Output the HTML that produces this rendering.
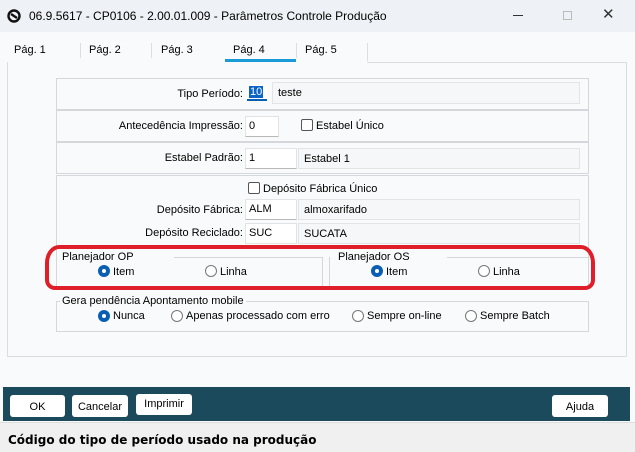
<!DOCTYPE html>
<html><head><meta charset="utf-8"><style>
*{box-sizing:border-box;margin:0;padding:0}
body{width:635px;height:452px;overflow:hidden;background:#f9fafb;font-family:"Liberation Sans",sans-serif;font-size:11px;color:#000;position:relative}
.a{position:absolute;white-space:nowrap}
.box{position:absolute;border:1px solid #d4d7db;background:#f9fafb}
.in{position:absolute;background:#fff;border:1px solid #e3e3e3;border-bottom:1px solid #b8b8b8;padding:3px 0 0 3px;font-size:11px}
.ro{position:absolute;background:#f6f7f8;border:1px solid #e2e4e6;padding:4px 0 0 5px}
.rl{position:absolute;text-align:right;width:200px}
.rad{position:absolute;width:12px;height:12px;border-radius:50%;border:1px solid #777;background:#fff}
.rad.on{border:none;background:#0a5fb4}
.rad.on:after{content:"";position:absolute;left:4px;top:4px;width:4px;height:4px;border-radius:50%;background:#fff}
.cb{position:absolute;width:12px;height:12px;border:1px solid #555;border-radius:2px;background:#fff}
.btn{position:absolute;background:#fff;border-radius:3px;text-align:center;padding-top:6px}
.vl{position:absolute;width:1px;background:#d4d7db}
.hl{position:absolute;height:1px;background:#d4d7db}
</style></head><body>
<div class="a" style="left:0;top:0;width:635px;height:32px;background:#eef1f5"></div>
<svg class="a" style="left:7px;top:9px" width="14" height="14" viewBox="0 0 14 14"><circle cx="7" cy="7" r="5.5" fill="none" stroke="#111" stroke-width="2.4"/><path d="M4 5 L10 9" stroke="#111" stroke-width="2.4"/></svg>
<div class="a" style="left:29px;top:9px;font-size:12px">06.9.5617 - CP0106 - 2.00.01.009 - Parâmetros Controle Produção</div>
<div class="a" style="left:513px;top:15px;width:10px;height:1px;background:#333"></div>
<div class="a" style="left:563px;top:11px;width:9px;height:9px;border:1px solid #bbb"></div>
<div class="a" style="left:602px;top:5px;font-size:15px;color:#333">✕</div>
<div class="a" style="left:0;top:32px;width:635px;height:30px;background:#f9fafb"></div>
<div class="a" style="left:14px;top:44px">Pág. 1</div>
<div class="a" style="left:80px;top:43px;width:1px;height:15px;background:#ddd"></div>
<div class="a" style="left:89px;top:44px">Pág. 2</div>
<div class="a" style="left:151px;top:43px;width:1px;height:15px;background:#ddd"></div>
<div class="a" style="left:161px;top:44px">Pág. 3</div>
<div class="a" style="left:233px;top:44px">Pág. 4</div>
<div class="a" style="left:225px;top:59px;width:71px;height:3px;background:#1a9bd7"></div>
<div class="a" style="left:296px;top:43px;width:1px;height:15px;background:#ddd"></div>
<div class="a" style="left:305px;top:44px">Pág. 5</div>
<div class="a" style="left:367px;top:43px;width:1px;height:18px;background:#ddd"></div>
<div class="box" style="left:7px;top:62px;width:620px;height:295px;border-color:#dcdcdc;border-top:none"></div>
<div class="a" style="left:367px;top:62px;width:260px;height:1px;background:#dcdcdc"></div>

<div class="box" style="left:56px;top:78px;width:533px;height:32px"></div>
<div class="rl" style="left:43px;top:88px">Tipo Período:</div>
<div class="a" style="left:247px;top:85px;width:20px;height:16px;background:#fff;border-bottom:2px solid #0a5fb4"><span style="background:#0a64c8;color:#fff;padding:0 1px;margin-left:2px;position:relative;top:1px">10</span></div>
<div class="ro" style="left:272px;top:82px;width:308px;height:22px">teste</div>

<div class="box" style="left:56px;top:110px;width:533px;height:32px"></div>
<div class="rl" style="left:43px;top:120px">Antecedência Impressão:</div>
<div class="in" style="left:245px;top:116px;width:34px;height:21px">0</div>
<div class="cb" style="left:301px;top:119px"></div>
<div class="a" style="left:316px;top:120px">Estabel Único</div>

<div class="box" style="left:56px;top:142px;width:533px;height:32px"></div>
<div class="rl" style="left:43px;top:152px">Estabel Padrão:</div>
<div class="in" style="left:245px;top:148px;width:52px;height:21px">1</div>
<div class="ro" style="left:298px;top:148px;width:282px;height:21px">Estabel 1</div>

<div class="box" style="left:56px;top:175px;width:533px;height:74px;border-bottom:none"></div>
<div class="cb" style="left:248px;top:182px"></div>
<div class="a" style="left:263px;top:183px">Depósito Fábrica Único</div>
<div class="rl" style="left:43px;top:204px">Depósito Fábrica:</div>
<div class="in" style="left:245px;top:199px;width:52px;height:21px">ALM</div>
<div class="ro" style="left:298px;top:199px;width:282px;height:21px">almoxarifado</div>
<div class="rl" style="left:43px;top:227px">Depósito Reciclado:</div>
<div class="in" style="left:245px;top:223px;width:52px;height:21px;border-bottom-color:#e3e3e3">SUC</div>
<div class="ro" style="left:298px;top:223px;width:282px;height:21px">SUCATA</div>

<div class="vl" style="left:56px;top:249px;height:40px"></div>
<div class="hl" style="left:174px;top:257px;width:148px"></div>
<div class="vl" style="left:322px;top:257px;height:32px"></div>
<div class="a" style="left:62px;top:251px">Planejador OP</div>
<div class="rad on" style="left:98px;top:265px"></div><div class="a" style="left:113px;top:266px">Item</div>
<div class="rad" style="left:205px;top:265px"></div><div class="a" style="left:220px;top:266px">Linha</div>
<div class="vl" style="left:329px;top:257px;height:32px"></div>
<div class="hl" style="left:447px;top:257px;width:141px"></div>
<div class="vl" style="left:588px;top:249px;height:40px"></div>
<div class="a" style="left:338px;top:251px">Planejador OS</div>
<div class="rad on" style="left:371px;top:265px"></div><div class="a" style="left:386px;top:266px">Item</div>
<div class="rad" style="left:478px;top:265px"></div><div class="a" style="left:493px;top:266px">Linha</div>
<div class="a" style="left:45px;top:245px;width:550px;height:45px;border:4px solid #de1f2a;border-radius:14px 14px 10px 10px/18px 18px 10px 10px"></div>

<div class="box" style="left:56px;top:301px;width:533px;height:31px;background:transparent"></div>
<div class="a" style="left:60px;top:295px;background:#f9fafb;padding:0 2px">Gera pendência Apontamento mobile</div>
<div class="rad on" style="left:98px;top:310px"></div><div class="a" style="left:113px;top:310px">Nunca</div>
<div class="rad" style="left:171px;top:310px"></div><div class="a" style="left:186px;top:310px">Apenas processado com erro</div>
<div class="rad" style="left:352px;top:310px"></div><div class="a" style="left:367px;top:310px">Sempre on-line</div>
<div class="rad" style="left:465px;top:310px"></div><div class="a" style="left:480px;top:310px">Sempre Batch</div>

<div class="a" style="left:3px;top:387px;width:627px;height:34px;background:#1b4a5c"></div>
<div class="btn" style="left:10px;top:395px;width:55px;height:22px">OK</div>
<div class="btn" style="left:72px;top:395px;width:56px;height:22px">Cancelar</div>
<div class="btn" style="left:136px;top:394px;width:56px;height:21px;padding-top:4px">Imprimir</div>
<div class="btn" style="left:552px;top:395px;width:56px;height:22px">Ajuda</div>
<div class="a" style="left:0;top:422px;width:635px;height:30px;background:#f0f0f0;border-top:1px solid #ddd"></div>
<div class="a" style="left:8px;top:433px;font-weight:bold;font-family:'DejaVu Sans',sans-serif;font-size:12px">Código do tipo de período usado na produção</div>
</body></html>
